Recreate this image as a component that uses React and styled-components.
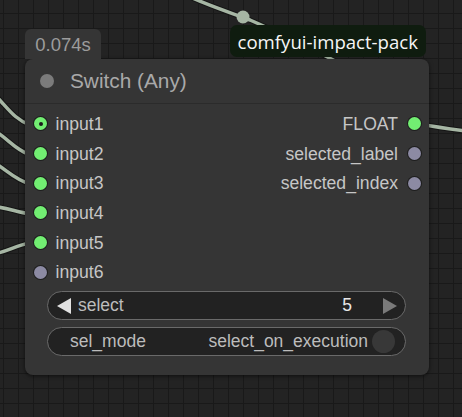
import React from "react";
import styled, { createGlobalStyle } from "styled-components";

const GlobalStyle = createGlobalStyle`
  html, body {
    margin: 0;
    padding: 0;
    background: #222222;
  }
  * {
    box-sizing: border-box;
  }
`;

const inputs = [
  { name: "input1", color: "#72ee72", linked: true },
  { name: "input2", color: "#72ee72" },
  { name: "input3", color: "#72ee72" },
  { name: "input4", color: "#72ee72" },
  { name: "input5", color: "#72ee72" },
  { name: "input6", color: "#8c8aa3" },
];

const outputs = [
  { name: "FLOAT", color: "#72ee72" },
  { name: "selected_label", color: "#8c8aa3" },
  { name: "selected_index", color: "#8c8aa3" },
];

function Wires() {
  const paths = [
    "M -6 94 C 8 108, 14 119, 30 125",
    "M -2 133 C 10 141, 15 149, 30 155",
    "M -2 165 C 10 173, 16 180, 30 184",
    "M -2 207 C 10 209, 18 212, 30 214",
    "M -2 253 C 10 250, 18 245, 30 243",
    "M 420 124 C 436 127, 450 129, 466 131",
    "M 188 -4 C 212 7, 232 13, 250 20 C 280 33, 310 48, 345 66",
  ];
  return (
    <WireLayer width="462" height="417" viewBox="0 0 462 417">
      {paths.map((d) => (
        <path key={d + "o"} d={d} stroke="#151515" strokeWidth="5.5" fill="none" />
      ))}
      {paths.map((d) => (
        <path key={d} d={d} stroke="#a6b6a4" strokeWidth="3.5" fill="none" />
      ))}
      <circle cx="243" cy="17" r="6.5" fill="#a6b6a4" />
    </WireLayer>
  );
}

function ArrowLeft() {
  return (
    <svg width="15" height="16" viewBox="0 0 15 16">
      <polygon points="14,0 14,16 0,8" fill="#e2e2e2" />
    </svg>
  );
}

function ArrowRight() {
  return (
    <svg width="15" height="16" viewBox="0 0 15 16">
      <polygon points="1,0 1,16 15,8" fill="#7a7a7a" />
    </svg>
  );
}

export default function App() {
  return (
    <>
      <GlobalStyle />
      <Canvas>
        <Wires />
        <NodeArea>
          <BadgeRow>
            <TimeBadge>0.074s</TimeBadge>
            <PackBadge>comfyui-impact-pack</PackBadge>
          </BadgeRow>
          <Node>
            <Title>
              <TitleDot />
              <TitleText>Switch (Any)</TitleText>
            </Title>
            <Slots>
              <SlotColumn>
                {inputs.map((s) => (
                  <SlotRow key={s.name}>
                    <Dot $color={s.color} $linked={s.linked} />
                    <SlotLabel>{s.name}</SlotLabel>
                  </SlotRow>
                ))}
              </SlotColumn>
              <SlotColumn $right>
                {outputs.map((s) => (
                  <SlotRow key={s.name} $right>
                    <SlotLabel>{s.name}</SlotLabel>
                    <Dot $color={s.color} />
                  </SlotRow>
                ))}
              </SlotColumn>
            </Slots>
            <Widgets>
              <Widget>
                <ArrowLeft />
                <WidgetLabel $gap={6}>select</WidgetLabel>
                <WidgetValue>5</WidgetValue>
                <ArrowRight />
              </Widget>
              <Widget $toggle>
                <WidgetLabel $gap={0}>sel_mode</WidgetLabel>
                <ToggleText>select_on_execution</ToggleText>
                <ToggleKnob />
              </Widget>
            </Widgets>
          </Node>
        </NodeArea>
      </Canvas>
    </>
  );
}

const Canvas = styled.div`
  position: relative;
  width: 462px;
  height: 417px;
  overflow: hidden;
  background-color: #232323;
  background-image: linear-gradient(#191919 1px, transparent 1px),
    linear-gradient(90deg, #191919 1px, transparent 1px);
  background-size: 15px 15px;
  background-position: 3px 13px;
  font-family: "Liberation Sans", Arial, sans-serif;
  padding: 25px 0 0 25px;
`;

const WireLayer = styled.svg`
  position: absolute;
  left: 0;
  top: 0;
`;

const NodeArea = styled.div`
  position: relative;
  width: 404px;
`;

const BadgeRow = styled.div`
  display: flex;
  justify-content: space-between;
  align-items: flex-end;
  padding-right: 3px;
  height: 34px;
`;

const TimeBadge = styled.div`
  height: 30px;
  width: 76px;
  margin-top: 4px;
  background: #353535;
  border-radius: 6px 6px 0 0;
  color: #9c9c9c;
  font-size: 18.5px;
  display: flex;
  align-items: center;
  justify-content: center;
  padding-top: 1px;
`;

const PackBadge = styled.div`
  height: 32px;
  margin-bottom: 2px;
  padding: 0 8px;
  background: #0f1c0f;
  border-radius: 7px;
  color: #f6f6f6;
  font-family: "Open Sans", "Noto Sans", sans-serif;
  font-size: 18.6px;
  display: flex;
  align-items: center;
`;

const Node = styled.div`
  background: #353535;
  border-radius: 8px;
  box-shadow: 0 1px 4px rgba(0, 0, 0, 0.6);
  padding-bottom: 19px;
`;

const Title = styled.div`
  height: 45px;
  display: flex;
  align-items: center;
  padding-left: 15px;
  gap: 16px;
  border-bottom: 1px solid #2b2b2b;
`;

const TitleDot = styled.span`
  width: 14px;
  height: 14px;
  border-radius: 50%;
  background: #7b7b7b;
`;

const TitleText = styled.span`
  color: #a9a9a9;
  font-size: 20.8px;
`;

const Slots = styled.div`
  display: flex;
  justify-content: space-between;
  padding-top: 5px;
`;

const SlotColumn = styled.div`
  display: flex;
  flex-direction: column;
  align-items: ${(p) => (p.$right ? "flex-end" : "flex-start")};
`;

const SlotRow = styled.div`
  height: 29.7px;
  flex-shrink: 0;
  display: flex;
  align-items: center;
  gap: ${(p) => (p.$right ? "10px" : "8.5px")};
  padding: ${(p) => (p.$right ? "0 8px 0 0" : "0 0 0 9px")};
`;

const Dot = styled.span`
  position: relative;
  width: 13px;
  height: 13px;
  border-radius: 50%;
  background: ${(p) => p.$color};
  box-shadow: 0 0 0 1px #1e1e1e;
  &::after {
    content: "";
    display: ${(p) => (p.$linked ? "block" : "none")};
    position: absolute;
    left: 4.5px;
    top: 4.5px;
    width: 4px;
    height: 4px;
    border-radius: 50%;
    background: #1c1c1c;
  }
`;

const SlotLabel = styled.span`
  color: #c6c6c6;
  font-size: 17.6px;
  line-height: 1;
  padding-top: 2px;
`;

const Widgets = styled.div`
  display: flex;
  flex-direction: column;
  gap: 7px;
  margin: 4px 23px 0 22px;
`;

const Widget = styled.div`
  height: 29px;
  border-radius: 15px;
  background: #222222;
  border: 1px solid #6a6a6a;
  display: flex;
  align-items: center;
  padding: ${(p) => (p.$toggle ? "0 10px 0 22px" : "0 8px 0 9px")};
`;

const WidgetLabel = styled.span`
  color: #bcbcbc;
  font-size: 17.5px;
  margin-left: ${(p) => p.$gap}px;
  flex: 1;
`;

const WidgetValue = styled.span`
  color: #e8e8e8;
  font-size: 17.5px;
  margin-right: 30px;
`;

const ToggleText = styled.span`
  color: #bcbcbc;
  font-size: 17.5px;
  margin-right: 4px;
`;

const ToggleKnob = styled.span`
  width: 23px;
  height: 23px;
  border-radius: 50%;
  background: #383838;
`;
